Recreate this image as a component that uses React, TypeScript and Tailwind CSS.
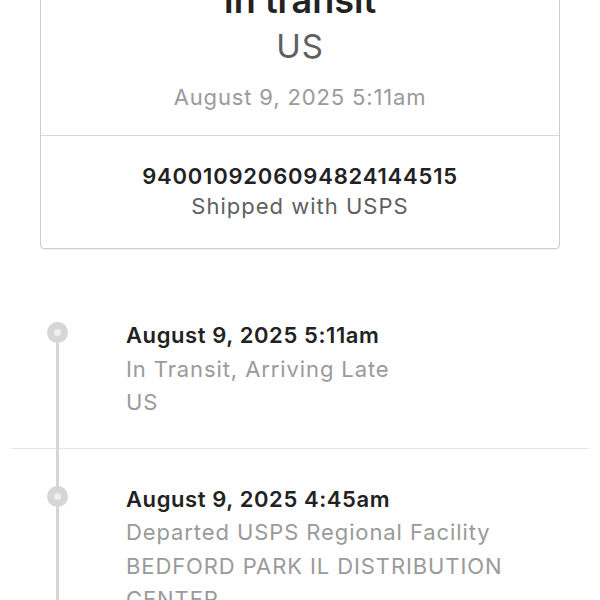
const events = [
  {
    time: 'August 9, 2025 5:11am',
    lines: ['In Transit, Arriving Late', 'US'],
  },
  {
    time: 'August 9, 2025 4:45am',
    lines: ['Departed USPS Regional Facility', 'BEDFORD PARK IL DISTRIBUTION CENTER'],
  },
];

function TimelineItem({ time, lines, first }: { time: string; lines: string[]; first: boolean }) {
  return (
    <li className="relative border-b border-[#e6e6e6] pt-[34px] pb-[28px] pl-[115px] pr-[30px]">
      {/* rail */}
      <span
        className={
          first
            ? 'absolute left-[45px] top-[48px] bottom-[-1px] z-10 w-[3px] bg-[#d6d6d6]'
            : 'absolute left-[45px] top-0 bottom-[-1px] z-10 w-[3px] bg-[#d6d6d6]'
        }
      />
      {/* node */}
      <span className="absolute left-[36px] top-[37px] z-20 flex h-[21px] w-[21px] items-center justify-center rounded-full bg-[#d6d6d6]">
        <span className="h-[7px] w-[7px] rounded-full bg-[#efefef]" />
      </span>
      <p className="text-[22px] font-semibold leading-[33.5px] tracking-[0.6px] text-[#222]">{time}</p>
      {lines.map((l) => (
        <p key={l} className="text-[22px] leading-[33.5px] tracking-[0.9px] text-[#9a9a9a]">
          {l}
        </p>
      ))}
    </li>
  );
}

export default function App() {
  return (
    <div className="h-[600px] w-[600px] overflow-hidden bg-white font-['Inter',sans-serif]">
      <div className="mx-[40px] rounded-[4px] border border-[#cdcdcd] shadow-[0_1px_1px_rgba(0,0,0,0.06)] -mt-[21px]">
        <div className="pb-[24px] text-center">
          <h1 className="text-[36px] font-semibold leading-[40px] text-[#222]">In transit</h1>
          <p className="mt-[6px] text-[33px] leading-[40px] tracking-[1px] text-[#5f5f5f]">US</p>
          <p className="mt-[17px] text-[22px] leading-[28px] tracking-[0.85px] text-[#9a9a9a]">August 9, 2025 5:11am</p>
        </div>
        <div className="border-t border-[#d6d6d6] pt-[25px] pb-[27px] text-center">
          <p className="text-[22px] font-semibold leading-[30px] tracking-[0.8px] text-[#222]">9400109206094824144515</p>
          <p className="text-[22px] leading-[30px] tracking-[1px] text-[#5f5f5f]">Shipped with USPS</p>
        </div>
      </div>
      <ul className="mx-[11px] mt-[36px]">
        {events.map((e, i) => (
          <TimelineItem key={e.time} time={e.time} lines={e.lines} first={i === 0} />
        ))}
      </ul>
    </div>
  );
}
